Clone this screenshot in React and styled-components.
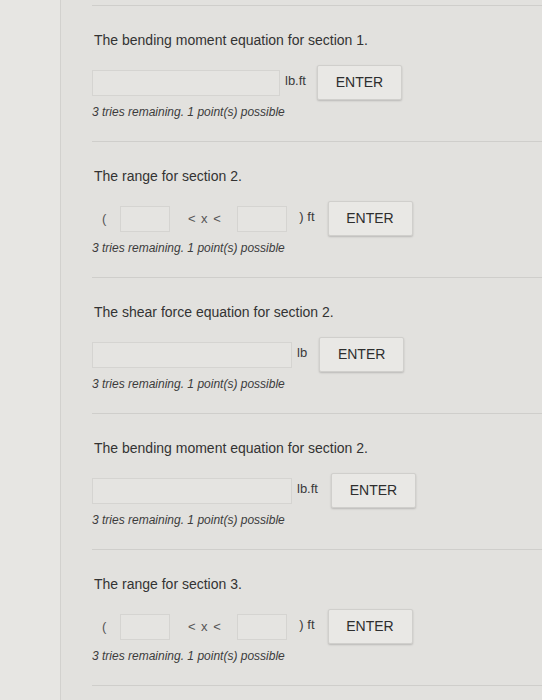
import React from "react";
import styled, { createGlobalStyle } from "styled-components";

const GlobalStyle = createGlobalStyle`
  html, body {
    margin: 0;
    padding: 0;
    background: #e2e1de;
  }
  body {
    font-family: "Liberation Sans", Arial, sans-serif;
    color: #353535;
  }
`;

const Page = styled.div`
  display: flex;
  width: 542px;
  height: 700px;
  overflow: hidden;
`;

const SideStrip = styled.div`
  width: 60px;
  flex: none;
  background: #e7e6e3;
  border-right: 1px solid #d2d1ce;
`;

const Content = styled.div`
  flex: 1;
  padding: 5px 0 0 31px;
`;

const Section = styled.div`
  border-top: 1px solid #cfcecb;
  padding: 25px 0 22px 0;
`;

const Question = styled.div`
  font-size: 14px;
  line-height: 18px;
  padding-left: 2px;
  color: #333;
`;

const Row = styled.div`
  display: flex;
  align-items: center;
  height: 34px;
  margin-top: 16px;
  padding-left: ${(p) => p.$indent || 0}px;
`;

const Field = styled.div`
  width: ${(p) => p.$w}px;
  height: 26px;
  background: #e5e4e1;
  border: 1px solid #d5d4d1;
  box-sizing: border-box;
  margin-top: 1px;
`;

const Unit = styled.span`
  font-size: 13px;
  color: #3a3a3a;
  margin-left: ${(p) => p.$ml || 5}px;
  margin-right: ${(p) => p.$mr || 10}px;
  margin-top: -3px;
`;

const Paren = styled.span`
  font-size: 13px;
  color: #555;
  margin-right: 14px;
`;

const Between = styled.span`
  width: 40px;
  font-size: 13px;
  color: #555;
  margin: 0 13px 0 14px;
  text-align: center;
  word-spacing: 2px;
`;

const EnterButton = styled.button`
  width: ${(p) => p.$w || 85}px;
  height: 35px;
  background: #e9e8e5;
  border: 1px solid #d0cfcc;
  border-radius: 2px;
  box-shadow: 0 1px 2px rgba(0, 0, 0, 0.18);
  font-family: "Liberation Sans", Arial, sans-serif;
  font-size: 14px;
  color: #2e2e2e;
  padding: 0;
`;

const Tries = styled.div`
  font-size: 12px;
  font-style: italic;
  line-height: 14px;
  margin-top: 6px;
  color: #3c3c3c;
`;

const EquationQuestion = ({ text, unit, fieldWidth, unitGap }) => (
  <Section>
    <Question>{text}</Question>
    <Row>
      <Field $w={fieldWidth} />
      <Unit $ml={5} $mr={unitGap}>
        {unit}
      </Unit>
      <EnterButton>ENTER</EnterButton>
    </Row>
    <Tries>3 tries remaining. 1 point(s) possible</Tries>
  </Section>
);

const RangeQuestion = ({ text }) => (
  <Section>
    <Question>{text}</Question>
    <Row $indent={10}>
      <Paren>(</Paren>
      <Field $w={50} />
      <Between>&lt; x &lt;</Between>
      <Field $w={50} />
      <Unit $ml={12} $mr={13}>
        ) ft
      </Unit>
      <EnterButton>ENTER</EnterButton>
    </Row>
    <Tries>3 tries remaining. 1 point(s) possible</Tries>
  </Section>
);

export default function App() {
  return (
    <>
      <GlobalStyle />
      <Page>
        <SideStrip />
        <Content>
          <EquationQuestion
            text="The bending moment equation for section 1."
            unit="lb.ft"
            fieldWidth={188}
            unitGap={11}
          />
          <RangeQuestion text="The range for section 2." />
          <EquationQuestion
            text="The shear force equation for section 2."
            unit="lb"
            fieldWidth={200}
            unitGap={12}
          />
          <EquationQuestion
            text="The bending moment equation for section 2."
            unit="lb.ft"
            fieldWidth={200}
            unitGap={13}
          />
          <RangeQuestion text="The range for section 3." />
          <Section />
        </Content>
      </Page>
    </>
  );
}
